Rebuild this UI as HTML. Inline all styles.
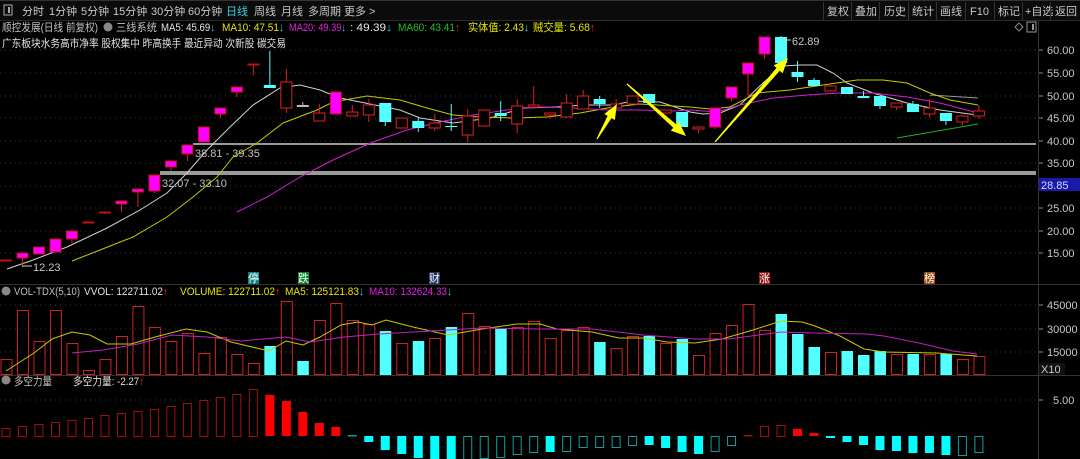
<!DOCTYPE html>
<html><head><meta charset="utf-8"><style>
html,body{margin:0;padding:0;background:#000;width:1080px;height:459px;overflow:hidden}
svg{display:block}
text{font-family:"Liberation Sans","Noto Sans CJK SC",sans-serif;font-size:11px}
</style></head><body>
<svg id="s" width="1080" height="459" xmlns="http://www.w3.org/2000/svg">
<rect width="1080" height="459" fill="#000"/>
<rect x="0" y="0" width="1080" height="20" fill="#0b0b0b"/>
<line x1="0" y1="0.5" x2="1080" y2="0.5" stroke="#333"/>
<line x1="0" y1="20.5" x2="1080" y2="20.5" stroke="#2a2a2a"/>
<rect x="4" y="5" width="8" height="10" fill="none" stroke="#aaa"/><rect x="8" y="7" width="2" height="6" fill="#aaa"/>
<g fill="#c8c8c8" font-size="11">
<text x="22" y="15">分时</text><text x="49" y="15">1分钟</text><text x="81" y="15">5分钟</text><text x="113" y="15">15分钟</text><text x="151" y="15">30分钟</text><text x="188" y="15">60分钟</text>
<text x="226" y="15" fill="#3cd0e0">日线</text><text x="254" y="15">周线</text><text x="281" y="15">月线</text><text x="308" y="15">多周期</text><text x="344" y="15">更多 &gt;</text>
<text x="827" y="15">复权</text><text x="855" y="15">叠加</text><text x="884" y="15">历史</text><text x="912" y="15">统计</text><text x="940" y="15">画线</text><text x="970" y="15">F10</text><text x="998" y="15">标记</text><text x="1025" y="15">+自选</text><text x="1055" y="15">返回</text>
</g>
<g stroke="#333"><line x1="823.5" y1="2" x2="823.5" y2="20"/><line x1="851.5" y1="2" x2="851.5" y2="20"/><line x1="879.5" y1="2" x2="879.5" y2="20"/><line x1="908.5" y1="2" x2="908.5" y2="20"/><line x1="936.5" y1="2" x2="936.5" y2="20"/><line x1="965.5" y1="2" x2="965.5" y2="20"/><line x1="994.5" y1="2" x2="994.5" y2="20"/><line x1="1022.5" y1="2" x2="1022.5" y2="20"/><line x1="1050.5" y1="2" x2="1050.5" y2="20"/></g>
<text x="2" y="31" fill="#c0c0c0" textLength="96" lengthAdjust="spacingAndGlyphs">顺控发展(日线 前复权)</text>
<circle cx="108" cy="27" r="4.5" fill="#888"/>
<text x="116" y="31" fill="#c0c0c0" textLength="41" lengthAdjust="spacingAndGlyphs">三线系统</text>
<text x="161" y="31" fill="#e8e8e8" textLength="54" lengthAdjust="spacingAndGlyphs">MA5: 45.69<tspan fill="#3cd0e0">↓</tspan></text>
<text x="222" y="31" fill="#e6e600" textLength="62" lengthAdjust="spacingAndGlyphs">MA10: 47.51<tspan fill="#3cd0e0">↓</tspan></text>
<text x="289" y="31" fill="#e020e0" textLength="57" lengthAdjust="spacingAndGlyphs">MA20: 49.39<tspan fill="#3cd0e0">↓</tspan></text>
<text x="350" y="31" fill="#e8e8e8" textLength="42" lengthAdjust="spacingAndGlyphs">: 49.39<tspan fill="#3cd0e0">↓</tspan></text>
<text x="398" y="31" fill="#20c020" textLength="62" lengthAdjust="spacingAndGlyphs">MA60: 43.41<tspan fill="#ff2020">↑</tspan></text>
<text x="468" y="31" fill="#e6e600" textLength="61" lengthAdjust="spacingAndGlyphs">实体值: 2.43<tspan fill="#3cd0e0">↓</tspan></text>
<text x="533" y="31" fill="#e6e600" textLength="62" lengthAdjust="spacingAndGlyphs">贼交量: 5.68<tspan fill="#ff2020">↑</tspan></text>
<text x="2" y="47" fill="#e0e0e0" textLength="284" lengthAdjust="spacingAndGlyphs">广东板块水务高市净率 股权集中 昨高换手 最近异动 次新股 碳交易</text>
<path d="M1015 27 l4 -4 l4 4 l-4 4z" fill="none" stroke="#888"/>
<rect x="1027" y="22" width="9" height="10" fill="none" stroke="#999"/><rect x="1032" y="24" width="2" height="6" fill="#999"/>
<g id="g"></g>
</svg>
<script>
var s=document.getElementById('g'),H='';
function cx(i){return 6+16.49*i}
function pl(pts,c,w){H+='<polyline fill="none" stroke="'+c+'" stroke-width="'+(w||1)+'" points="'+pts+'"/>'}
function tx(x,y,fill,len,content){H+='<text x="'+x+'" y="'+y+'" fill="'+fill+'" textLength="'+len+'" lengthAdjust="spacingAndGlyphs">'+content+'</text>'}
[50,73,96,118,141,163,186,208,231,253].forEach(function(y,k){H+='<line x1="0" y1="'+y+'" x2="1036" y2="'+y+'" stroke="#3a3a3a" stroke-dasharray="1,4"/>';
 H+='<line x1="1038" y1="'+y+'" x2="1043" y2="'+y+'" stroke="#888"/>';
 H+='<text x="1047" y="'+(y+4)+'" fill="#c8c8c8" font-size="11">'+['60.00','55.00','50.00','45.00','40.00','35.00','30.00','25.00','20.00','15.00'][k]+'</text>'});
[305,329,352].forEach(function(y,k){H+='<line x1="0" y1="'+y+'" x2="1036" y2="'+y+'" stroke="#3a3a3a" stroke-dasharray="1,4"/><line x1="1038" y1="'+y+'" x2="1043" y2="'+y+'" stroke="#888"/><text x="1047" y="'+(y+4)+'" fill="#c8c8c8">'+['45000','30000','15000'][k]+'</text>'});
H+='<line x1="0" y1="400" x2="1036" y2="400" stroke="#3a3a3a" stroke-dasharray="1,4"/><line x1="1038" y1="400" x2="1043" y2="400" stroke="#888"/><text x="1053" y="404" fill="#c8c8c8">5.00</text>';
H+='<rect x="1039" y="363" width="26" height="13" fill="#111"/><text x="1041" y="373" fill="#c8c8c8">X10</text>';
H+='<line x1="1038.5" y1="21" x2="1038.5" y2="459" stroke="#333"/><line x1="0" y1="284.5" x2="1080" y2="284.5" stroke="#333"/><line x1="0" y1="375.5" x2="1080" y2="375.5" stroke="#333"/>';
H+='<rect x="193" y="143" width="843" height="2" fill="#9a9a9a"/><rect x="160" y="171" width="876" height="4" fill="#9a9a9a"/>';
H+='<text x="195" y="157" fill="#c0c0c0">38.81 - 39.35</text><text x="162" y="187" fill="#c0c0c0">32.07 - 33.10</text>';
H+='<rect x="1039" y="178" width="41" height="13" fill="#1a1aa8"/><text x="1041" y="189" fill="#d8d8ff">28.85</text>';
pl('7,269 33,260 67,247 107,228 140,210 167,193 187,173 207,150 230,127 253,105 280,88 300,85 320,90 340,98 360,102 400,110 420,118 453,123 490,118 523,108 557,107 583,105 613,105 633,101 660,102 690,112 703,114 720,113 740,105 763,83 783,66 800,65 817,65 833,73 847,83 873,93 907,103 940,110 977,115','#d0d0d0');
pl('930,95 978,98','#999');
pl('72,261 100,250 133,237 167,217 193,197 217,177 233,157 257,143 283,123 317,110 333,102 367,96 400,100 427,108 453,115 480,117 513,118 547,117 580,113 613,107 640,104 673,106 690,107 710,109 730,107 757,93 790,90 823,85 857,80 883,80 907,83 930,93 950,100 978,105','#c8c800');
pl('237,212 267,197 300,177 333,160 373,142 407,130 440,122 473,115 507,110 540,107 573,108 607,110 640,110 673,111 690,110 717,112 740,105 773,98 807,95 840,93 873,93 907,97 940,103 978,113','#d020d0');
pl('897,138 978,124','#20b020');
var C=[[260,260,260,260,'m'],[253,258,253,267,'m'],[247,254,247,254,'m'],[239,252,239,252,'m'],[231,239,231,243,'m'],[222,222,222,222,'m'],[212,213,212,214,'m'],[201,204,201,212,'m'],[189,192,189,207,'m'],[175,191,175,193,'m'],[161,167,161,171,'m'],[145,154,145,161,'m'],[127,142,127,142,'m'],[108,114,108,118,'m'],[87,92,87,97,'m'],[64,65,64,75,'m'],[85,88,51,88,'c'],[82,108,69,113,'r'],[105,105,102,105,'w'],[113,121,104,121,'r'],[92,114,92,114,'m'],[112,116,105,116,'r'],[105,115,99,122,'r'],[103,122,103,126,'c'],[118,128,118,128,'r'],[121,128,117,132,'c'],[123,128,114,131,'r'],[126,127,104,131,'c'],[116,135,109,142,'r'],[110,126,110,126,'r'],[113,116,101,121,'c'],[106,124,99,133,'r'],[105,107,86,107,'r'],[113,115,113,119,'r'],[103,117,94,118,'r'],[96,109,90,109,'r'],[99,104,96,108,'c'],[104,108,99,108,'r'],[96,104,96,104,'r'],[94,103,94,103,'c'],[110,113,110,113,'r'],[112,127,112,127,'c'],[127,129,127,133,'r'],[108,127,108,129,'m'],[87,98,87,101,'m'],[63,74,63,97,'m'],[37,54,37,59,'m'],[37,63,36,63,'c'],[72,77,61,82,'c'],[80,86,78,86,'c'],[86,91,84,91,'r'],[87,94,87,94,'c'],[96,98,91,98,'c'],[96,106,96,109,'c'],[103,107,103,110,'r'],[104,112,101,112,'c'],[108,114,99,117,'r'],[113,121,113,125,'c'],[116,122,116,125,'r'],[111,116,105,119,'r']];
C.forEach(function(c,i){var x=cx(i),t=c[0],b=c[1],h=Math.max(b-t,1);
 var wc=c[4]=='c'?'#54ffff':c[4]=='w'?'#bbb':'#e02020';
 H+='<line x1="'+x+'" y1="'+c[2]+'" x2="'+x+'" y2="'+c[3]+'" stroke="'+wc+'"/>';
 if(c[4]=='m')H+='<rect x="'+(x-5.5)+'" y="'+t+'" width="11" height="'+h+'" fill="#ff00ff" stroke="#c01010"/>';
 else if(c[4]=='c')H+='<rect x="'+(x-6)+'" y="'+t+'" width="12" height="'+h+'" fill="#54ffff"/>';
 else if(c[4]=='w')H+='<rect x="'+(x-6)+'" y="'+t+'" width="12" height="2" fill="#bbb"/>';
 else H+='<rect x="'+(x-5.5)+'" y="'+t+'" width="11" height="'+h+'" fill="#000" stroke="#e02020"/>';});
H+='<line x1="22" y1="266" x2="32" y2="266" stroke="#ccc"/><text x="33" y="271" fill="#c8c8c8">12.23</text>';
H+='<text x="792" y="45" fill="#c8c8c8">62.89</text><line x1="784" y1="40" x2="791" y2="40" stroke="#ccc"/>';
function arr(x1,y1,x2,y2){var dx=x2-x1,dy=y2-y1,L=Math.hypot(dx,dy),ux=dx/L,uy=dy/L,nx=-uy,ny=ux,hl=15,bx=x2-ux*hl,by=y2-uy*hl;
 var p=[[x1+nx*.6,y1+ny*.6],[bx+nx*2.2,by+ny*2.2],[bx+nx*6,by+ny*6],[x2,y2],[bx-nx*6,by-ny*6],[bx-nx*2.2,by-ny*2.2],[x1-nx*.6,y1-ny*.6]];
 H+='<polygon fill="#ffff00" points="'+p.map(function(q){return q[0].toFixed(1)+','+q[1].toFixed(1)}).join(' ')+'"/>';}
arr(597,139,617,104);arr(627,84,686,136);arr(715,142,788,58);
[[248,'停','#0a8080'],[298,'跌','#108030'],[429,'财','#203060'],[759,'涨','#901010'],[924,'榜','#a04810']].forEach(function(m){H+='<rect x="'+m[0]+'" y="272" width="11" height="12" fill="'+m[2]+'"/><text x="'+m[0]+'" y="282" fill="#fff" font-size="10.5">'+m[1]+'</text>'});
H+='<circle cx="6" cy="291" r="4.5" fill="#888"/>';
tx(14,295,'#c0c0c0',66,'VOL-TDX(5,10)');
tx(84,295,'#e0e0e0',84,'VVOL: 122711.02<tspan fill="#ff2020">↑</tspan>');
tx(180,295,'#e6e600',100,'VOLUME: 122711.02<tspan fill="#ff2020">↑</tspan>');
tx(285,295,'#e6e600',79,'MA5: 125121.83<tspan fill="#3cd0e0">↓</tspan>');
tx(369,295,'#e020e0',83,'MA10: 132624.33<tspan fill="#3cd0e0">↓</tspan>');
var V=[[359,'r'],[310,'r'],[341,'r'],[310,'r'],[343,'r'],[370,'r'],[359,'r'],[336,'r'],[306,'r'],[327,'r'],[341,'r'],[333,'r'],[353,'r'],[337,'r'],[354,'r'],[363,'r'],[346,'c'],[301,'r'],[361,'c'],[320,'r'],[303,'r'],[320,'r'],[324,'r'],[331,'c'],[343,'r'],[341,'c'],[338,'r'],[327,'c'],[313,'r'],[326,'r'],[329,'c'],[327,'r'],[321,'r'],[338,'r'],[330,'r'],[327,'r'],[342,'c'],[348,'r'],[336,'r'],[336,'c'],[343,'r'],[339,'c'],[355,'r'],[333,'r'],[325,'r'],[304,'r'],[330,'r'],[314,'c'],[334,'c'],[347,'c'],[352,'r'],[351,'c'],[355,'c'],[351,'c'],[354,'r'],[354,'c'],[354,'r'],[354,'c'],[359,'r'],[356,'r']];
V.forEach(function(v,i){var x=cx(i)-5.5;if(v[1]=='c')H+='<rect x="'+x+'" y="'+v[0]+'" width="11.5" height="'+(375-v[0])+'" fill="#54ffff"/>';else H+='<rect x="'+(x+.5)+'" y="'+(v[0]+.5)+'" width="11" height="'+(374-v[0])+'" fill="none" stroke="#d02020"/>';});
pl('6,371 34,353 52,339 72,332 90,335 107,344 131,344 155,337 186,329 207,332 231,342 269,351 286,341 303,345 320,337 341,325 358,322 372,325 386,320 413,327 448,335 482,329 517,324 540,324 557,329 592,332 619,338 643,338 667,342 695,343 722,339 753,330 781,321 802,322 815,326 840,336 864,349 884,352 936,353 977,356','#c8c800');
pl('72,353 103,350 138,344 172,335 207,337 241,341 286,337 310,342 344,337 379,334 448,330 482,328 540,329 592,329 643,335 695,339 729,339 781,332 815,333 867,334 884,336 919,343 953,351 977,354','#c020c0');
H+='<circle cx="6" cy="380" r="4.5" fill="#888"/>';
tx(14,385,'#c0c0c0',38,'多空力量');
tx(73,385,'#e0e0e0',71,'多空力量: -2.27<tspan fill="#ff2020">↑</tspan>');
var B=[[428,'hr'],[426,'hr'],[424,'hr'],[422,'hr'],[420,'hr'],[418,'hr'],[415,'hr'],[413,'hr'],[411,'hr'],[409,'hr'],[406,'hr'],[403,'hr'],[400,'hr'],[397,'hr'],[394,'hr'],[389,'hr'],[395,'fr'],[401,'fr'],[412,'fr'],[423,'fr'],[427,'fr'],[437,'lc'],[442,'fc'],[450,'fc'],[454,'fc'],[458,'fc'],[460,'fc'],[462,'fc'],[461,'hc'],[458,'hc'],[457,'hc'],[454,'hc'],[452,'hc'],[452,'fc'],[451,'hc'],[447,'hc'],[447,'hc'],[447,'hc'],[445,'hc'],[445,'fc'],[448,'fc'],[452,'fc'],[454,'fc'],[451,'hc'],[445,'hc'],[437,'lr'],[426,'hr'],[425,'hr'],[429,'fr'],[433,'fr'],[438,'fc'],[442,'fc'],[445,'fc'],[450,'fc'],[451,'fc'],[453,'fc'],[453,'fc'],[455,'fc'],[455,'hc'],[452,'hc']];
B.forEach(function(b,i){var x=cx(i)-4.5,z=436,t=Math.min(b[0],z),h=Math.abs(b[0]-z)||1;
 if(b[1]=='hr')H+='<rect x="'+(x+.5)+'" y="'+(t+.5)+'" width="8" height="'+h+'" fill="none" stroke="#a01010"/>';
 else if(b[1]=='fr')H+='<rect x="'+x+'" y="'+t+'" width="9" height="'+h+'" fill="#ff0000"/>';
 else if(b[1]=='fc')H+='<rect x="'+x+'" y="'+t+'" width="9" height="'+h+'" fill="#00ffff"/>';
 else if(b[1]=='hc')H+='<rect x="'+(x+.5)+'" y="'+(t+.5)+'" width="8" height="'+h+'" fill="none" stroke="#10a0a0"/>';
 else if(b[1]=='lc')H+='<rect x="'+x+'" y="435" width="9" height="1.5" fill="#10a0a0"/>';
 else H+='<rect x="'+x+'" y="435" width="9" height="1.5" fill="#a01010"/>';});
s.innerHTML=H;
</script>
</body></html>
